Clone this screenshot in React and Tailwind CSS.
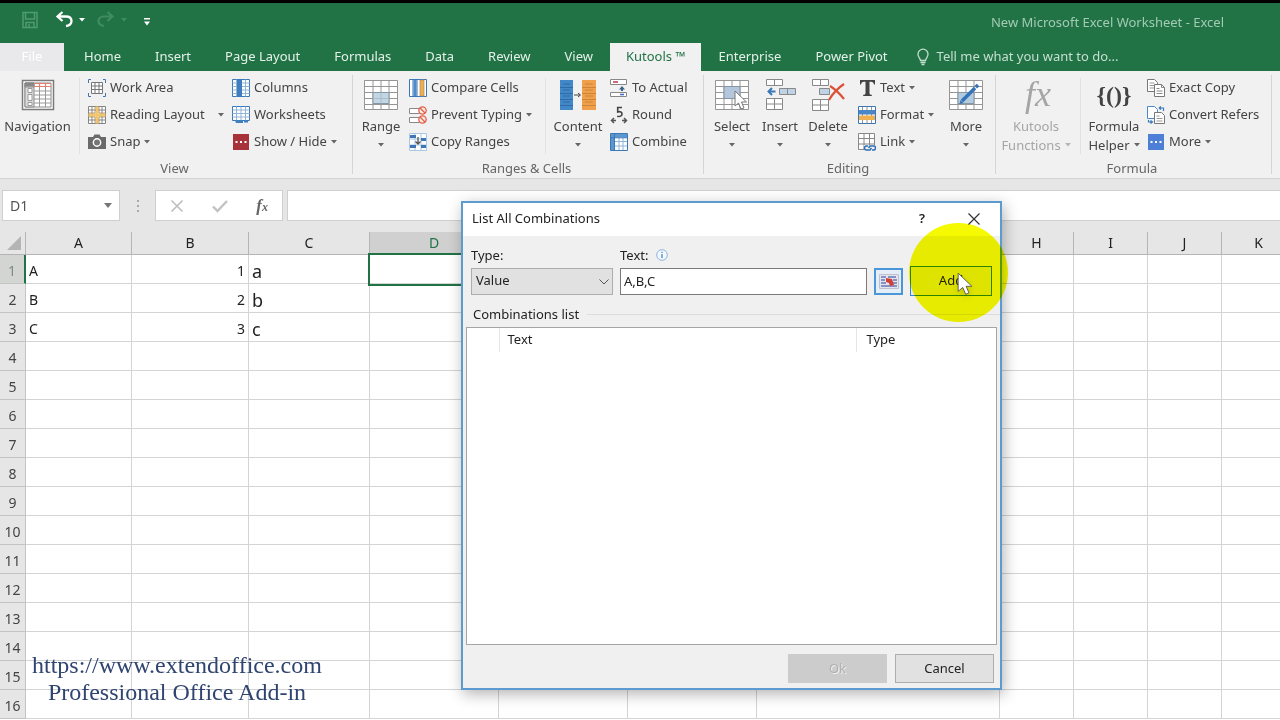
import React, { useState } from 'react'

const tabsBefore = ['Home', 'Insert', 'Page Layout', 'Formulas', 'Data', 'Review', 'View']
const tabsAfter = ['Enterprise', 'Power Pivot']

const columns = [
  { name: 'A', width: 'w-[106px]' },
  { name: 'B', width: 'w-[117px]' },
  { name: 'C', width: 'w-[121px]' },
  { name: 'D', width: 'w-[129px]' },
  { name: 'E', width: 'w-[129px]' },
  { name: 'F', width: 'w-[129px]' },
  { name: 'G', width: 'w-[243px]' },
  { name: 'H', width: 'w-[74px]' },
  { name: 'I', width: 'w-[74px]' },
  { name: 'J', width: 'w-[74px]' },
  { name: 'K', width: 'w-[74px]' },
]

const cells = {
  A1: 'A', B1: '1', C1: 'a',
  A2: 'B', B2: '2', C2: 'b',
  A3: 'C', B3: '3', C3: 'c',
}

const rows = Array.from({ length: 16 }, (_, i) => i + 1)

/* ---------- icons ---------- */

const Small = ({ children }) => (
  <svg viewBox="0 0 18 18" className="w-[18px] h-[18px] shrink-0" fill="none" aria-hidden="true">
    {children}
  </svg>
)

const Large = ({ children }) => (
  <svg viewBox="0 0 34 34" className="w-[34px] h-[34px] shrink-0" fill="none" aria-hidden="true">
    {children}
  </svg>
)

const Arrow = ({ className = 'text-[#666]' }) => (
  <svg viewBox="0 0 6 4" className={`w-[6px] h-[4px] shrink-0 ${className}`} aria-hidden="true">
    <path d="M0 0h6L3 3.5z" fill="currentColor" />
  </svg>
)

const NavigationIcon = () => (
  <Large>
    <path d="M1.5 2.5h31v29h-31z" fill="#fff" stroke="#7b7b7b" strokeWidth="1.5" />
    <path d="M4 5h26v24H4z" stroke="#8a8a8a" />
    <path d="M4 5h9v4H4zM4 5h9v24H4z" fill="#dcdcdc" stroke="#8a8a8a" />
    <path d="M4 5h9v3.5H4z" fill="#888" />
    <path d="M13 5.5h17M18.5 5v4M24.5 5v4M13 8.5h17" stroke="#e08070" strokeWidth="1.2" />
    <path d="M13 13h17M13 17h17M13 21h17M13 25h17M18.5 9v20M24.5 9v20" stroke="#999" />
    <path d="M7 10.5h4v4H7zM7 16.5h4v6H7zM7 24.5h4v3H7z" fill="#fff" stroke="#999" />
  </Large>
)

const WorkAreaIcon = () => (
  <Small>
    <path d="M.5 4V.5H3M15 .5h2.500V4M.5 14v3.500H3M15 17.500h2.500V14" stroke="#3b78b8" />
    <path d="M3.500 3.500h11v11h-11zM3.500 7h11M3.500 10.500h11M7 3.500v11M11 3.500v11" fill="#fff" stroke="#777" />
  </Small>
)

const ReadingLayoutIcon = () => (
  <Small>
    <path d="M.5 .5h17v17H.5zM.5 4h17M.5 14h17M4 .5v17M14 .5v17" fill="#fff" stroke="#858585" />
    <path d="M7.500 .5h3v17h-3zM.5 7.500h17v3H.5z" fill="#f4c66c" />
    <path d="M7 .5V7H.5M11 .5V7h6.500M7 17.500V11H.5M11 17.500V11h6.500" stroke="#a88a58" strokeWidth=".8" />
  </Small>
)

const SnapIcon = () => (
  <Small>
    <path d="M0 4h5l1.500-2.500h5L13 4h5v12H0z" fill="#6a6a6a" />
    <circle cx="9" cy="9.500" r="3.700" fill="#777" stroke="#fff" strokeWidth="1.400" />
  </Small>
)

const ColumnsIcon = () => (
  <Small>
    <path d="M.5 .5h17v17H.5z" fill="#fff" stroke="#3b78b8" />
    <path d="M.5 4h17M.5 7.500h17M.5 11h17M.5 14.500h17M4.500 .5v17M13.500 .5v17" stroke="#8fb4d8" />
    <path d="M5 .5h5v17H5z" fill="#3f7fbf" />
  </Small>
)

const WorksheetsIcon = () => (
  <Small>
    <path d="M.5 .5h17v14H.5z" fill="#fff" stroke="#3b78b8" />
    <path d="M.5 4h17M.5 7.500h17M.5 11h17M4.500 .5v14M9 .5v14M13.500 .5v14" stroke="#8fb4d8" />
    <path d="M3 14.500h8v2.500H4zM12 14.500h4v2h-4z" fill="#3f7fbf" />
  </Small>
)

const DotsIcon = ({ color }) => (
  <Small>
    <path d="M1 1h16v16H1z" fill={color} />
    <path d="M3.500 8h2v2h-2zM8 8h2v2H8zM12.500 8h2v2h-2z" fill="#fff" />
  </Small>
)

const GridLarge = ({ children }) => (
  <Large>
    <path d="M.5 2.500h33v29H.5z" fill="#fff" />
    <path d="M.5 2.500h33v29H.5zM.5 8.500h33M.5 14.500h33M.5 20.500h33M.5 26.500h33M9 2.500v29M17 2.500v29M25 2.500v29" stroke="#959595" />
    {children}
  </Large>
)

const RangeIcon = () => (
  <GridLarge>
    <path d="M9 14.500h16v11H9z" fill="#c3d6e4" stroke="#8597a5" />
    <path d="M9 20.500h16M17 14.500v11" stroke="#a8bccb" />
  </GridLarge>
)

const CompareIcon = () => (
  <Small>
    <path d="M.5 .5h17v17H.5zM4 .5v17M8 .5v17" fill="#fff" stroke="#3b78b8" />
    <path d="M4.500 1h3v16h-3z" fill="#4d8cc8" />
    <path d="M11 1h4v16h-4z" fill="#f0b050" stroke="#a88a60" strokeWidth=".7" />
  </Small>
)

const PreventIcon = () => (
  <Small>
    <path d="M.5 2.500h10v5H.5zM.5 11.500h10v5H.5z" fill="#fff" stroke="#888" />
    <g stroke="#e06048" strokeWidth="1.300" fill="#fbe9e5">
      <circle cx="13.500" cy="4.500" r="3.700" />
      <circle cx="13.500" cy="13.500" r="3.700" />
      <path d="M11 2l5 5M11 11l5 5" />
    </g>
  </Small>
)

const CopyRangesIcon = () => (
  <Small>
    <path d="M.5 .5h17v17H.5z" fill="#fff" stroke="#a9c6e2" />
    <path d="M.5 6h17M.5 12h17M6 .5v17M12 .5v17" stroke="#a9c6e2" />
    <path d="M1 2h6v3H1zM1 12h6v3H1zM12 5h5v3h-5zM12 12h5v3h-5z" fill="#3f76b8" />
    <path d="M9 4v7M6.500 8.500L9 11l2.500-2.500" stroke="#555" strokeWidth="1.300" />
  </Small>
)

const ContentIcon = () => (
  <svg viewBox="0 0 36 34" className="w-9 h-[34px] shrink-0" fill="none" aria-hidden="true">
    <path d="M0 2h13v30H0z" fill="#4288c8" />
    <path d="M22 2h14v30H22z" fill="#f0a04b" />
    <path d="M3 6h7M0 9.500h13M3 12h7M0 15.500h13M3 18h7M0 21.500h13M3 24h7M0 27.500h13" stroke="#2f6ba6" />
    <path d="M25 6h8M22 9.500h14M25 12h8M22 15.500h14M25 18h8M22 21.500h14M25 24h8M22 27.500h14" stroke="#cc8438" />
    <path d="M14 17h6M18 15l2.500 2-2.500 2" stroke="#444" />
  </svg>
)

const ToActualIcon = () => (
  <Small>
    <path d="M.5 .5h16v5H.5zM.5 13.500h16v4H.5z" fill="#fff" stroke="#888" />
    <path d="M3 3h5" stroke="#c2455a" strokeWidth="1.600" />
    <path d="M10 15.500h4" stroke="#4a6fd0" strokeWidth="1.600" />
    <path d="M12 7l3 3.500h-2V12h-2v-1.500H9z" fill="#3a5f90" />
  </Small>
)

const RoundIcon = () => (
  <Small>
    <path d="M12 1.500H7.700V6c2.500-.9 4.300 0 4.300 2s-2 3-4.800 2.200" stroke="#444" strokeWidth="1.600" />
    <path d="M6 14.500H1.500M4 12l-2.500 2.500L4 17M12 14.500h4.500M14 12l2.500 2.500L14 17" stroke="#555" strokeWidth="1.500" />
  </Small>
)

const CombineIcon = () => (
  <Small>
    <path d="M.5 .5h17v17H.5z" fill="#fff" stroke="#3b78b8" />
    <path d="M5 8.500h12M5 13h12M9 5v12M13 5v12" stroke="#8fb4d8" />
    <path d="M1 1h3.500v16H1z" fill="#5b97cf" />
    <path d="M4.500 1H17v3.500H4.500z" fill="#5b97cf" />
    <path d="M4.500 .5v17M.5 4.800h17" stroke="#3b78b8" />
  </Small>
)

const Pointer = ({ className }) => (
  <svg viewBox="0 0 14 21" className={className} aria-hidden="true">
    <path d="M1 1v16l4-3.500 2.600 6 2.900-1.200L8 12.500h5z" fill="#fff" stroke="#555" strokeWidth=".8" />
  </svg>
)

const SelectIcon = () => (
  <GridLarge>
    <path d="M9 8.500h16v12H9z" fill="#b3c6dc" stroke="#8597a5" />
    <path d="M20 13v15l3.500-3 2.500 6 3-1-2.500-6h5z" fill="#fff" stroke="#777" />
  </GridLarge>
)

const InsertIcon = () => (
  <Large>
    <path d="M3.500 1.500h16v6h-16zM11.500 1.500v6M3.500 20.500h16v11h-16zM11.500 20.500v11M3.500 26h16" fill="#fff" stroke="#888" />
    <path d="M16.500 10.500h16v6h-16zM24.500 10.500v6" fill="#c0d2e6" stroke="#888" />
    <path d="M12.500 13.500H5M9 10l-3.500 3.500L9 17" stroke="#3b78b8" strokeWidth="2" />
  </Large>
)

const DeleteIcon = () => (
  <Large>
    <path d="M1.500 1.500h16v6h-16zM9.500 1.500v6M1.500 21.500h16v11h-16zM9.500 21.500v11M1.500 27h16" fill="#fff" stroke="#888" />
    <path d="M8.500 10.500h10v6h-10z" fill="#c0d2e6" stroke="#888" />
    <path d="M19 8c5 3 10 8 14 13M33 6c-6 4-11 9-15 16" stroke="#dc5035" strokeWidth="2.200" />
  </Large>
)

const TextIcon = () => (
  <Small>
    <path d="M2 1h15v4.500h-1c-.4-2-1.200-2.800-3-2.800h-1.500V14c0 1.300.5 1.700 2.300 1.800V17H5.200v-1.200c1.800-.1 2.300-.5 2.300-1.800V2.700H6C4.200 2.700 3.400 3.500 3 5.500H2z" fill="#444" />
  </Small>
)

const FormatIcon = () => (
  <Small>
    <path d="M.5 .5h17v17H.5z" fill="#fff" stroke="#3b78b8" />
    <path d="M4.500 .5v17M9 .5v17M13.500 .5v17" stroke="#777" strokeWidth=".8" />
    <path d="M1 4h16v4.500H1z" fill="#4d86c6" />
    <path d="M1 9.500h16V14H1z" fill="#f0b050" />
  </Small>
)

const LinkIcon = () => (
  <Small>
    <path d="M.5 .5h16v16H.5zM.5 5.500h16M.5 11h16M6 .5v16M11.500 .5v16" fill="#fff" stroke="#888" />
    <path d="M6 12h12v6H6z" fill="#f1f1f1" />
    <path d="M10 13H8.500a2 2 0 000 4H12l1.500-2M14 17h1.500a2 2 0 000-4H12l-1.500 2" stroke="#2e70b8" strokeWidth="1.500" />
  </Small>
)

const MoreEditIcon = () => (
  <GridLarge>
    <path d="M9 14.500h16v11H9z" fill="#b3cbe0" stroke="#8597a5" />
    <path d="M13 23L26 10" stroke="#3572b8" strokeWidth="3.600" />
    <path d="M26.800 9.200L29 7" stroke="#3572b8" strokeWidth="3.600" />
    <path d="M10.500 26l1-4 3 3z" fill="#3572b8" />
  </GridLarge>
)

const ExactCopyIcon = () => (
  <Small>
    <path d="M.5 .5h7l3 3v9H.5z" fill="#fff" stroke="#777" />
    <path d="M2.500 4h5M2.500 6.500h5M2.500 9h5" stroke="#999" />
    <path d="M7.500 5.500h7l3 3v9h-10z" fill="#fff" stroke="#777" />
    <path d="M14.500 5.500v3h3M9.500 9.500h3M9.500 12h6M9.500 14.500h6" stroke="#888" />
  </Small>
)

const ConvertIcon = () => (
  <Small>
    <path d="M.5 .5h7l3 3v9H.5z" fill="#fff" stroke="#4a8ac8" />
    <path d="M7.500 6.500h7l3 3v8h-10z" fill="#fff" stroke="#777" />
    <path d="M9.500 10h3M9.500 12.500h6M9.500 15h6" stroke="#999" />
    <path d="M12 2h4.500v3M12 2l2-1.500M12 2l2 1.500M1.500 14v2H5M3.500 14.500L5.500 16l-2 1.500" stroke="#3b78b8" strokeWidth="1.200" />
  </Small>
)

/* ---------- ribbon parts ---------- */

const SmallButton = ({ icon, label, menu }) => (
  <button type="button" className="flex items-center gap-1 h-[27px] text-left whitespace-nowrap">
    {icon}
    <span>{label}</span>
    {menu && <Arrow />}
  </button>
)

const LargeButton = ({ icon, label, menu, width = 'w-12' }) => (
  <button type="button" className={`flex flex-col items-center self-start pt-1 shrink-0 ${width}`}>
    {icon}
    <span className="mt-1 leading-5 whitespace-nowrap">{label}</span>
    {menu && <Arrow className="mt-[7px] text-[#666]" />}
  </button>
)

const Divider = () => <div className="w-px h-[76px] mt-1 mx-1 bg-[#e2e2e2] shrink-0"></div>

const Group = ({ label, width, children }) => (
  <section className={`flex flex-col shrink-0 relative pt-[3px] ${width}`}>
    <div className="flex h-[85px]">{children}</div>
    <h2 className="text-center leading-[18px] pr-1 text-[#666]">{label}</h2>
    <div className="absolute right-0 top-1 bottom-1 w-px bg-[#d5d5d5]"></div>
  </section>
)

const Ribbon = () => (
  <div className="flex h-[108px] bg-[#f1f1f1] border-b border-[#d2d2d2] text-[13px] text-[#444] overflow-hidden">
    <Group label="View" width="w-[353px]">
      <LargeButton icon={<NavigationIcon />} label="Navigation" width="w-[75px]" />
      <Divider />
      <div className="grid grid-cols-[144px_auto] content-start ml-1">
        <SmallButton icon={<WorkAreaIcon />} label="Work Area" />
        <SmallButton icon={<ColumnsIcon />} label="Columns" />
        <div className="flex items-center justify-between pr-2">
          <SmallButton icon={<ReadingLayoutIcon />} label="Reading Layout" />
          <Arrow />
        </div>
        <SmallButton icon={<WorksheetsIcon />} label="Worksheets" />
        <SmallButton icon={<SnapIcon />} label="Snap" menu />
        <SmallButton icon={<DotsIcon color="#a8323a" />} label="Show / Hide" menu />
      </div>
    </Group>

    <Group label="Ranges & Cells" width="w-[351px]">
      <div className="w-1"></div>
      <LargeButton icon={<RangeIcon />} label="Range" menu />
      <div className="flex flex-col w-[132px] ml-1">
        <SmallButton icon={<CompareIcon />} label="Compare Cells" />
        <SmallButton icon={<PreventIcon />} label="Prevent Typing" menu />
        <SmallButton icon={<CopyRangesIcon />} label="Copy Ranges" />
      </div>
      <Divider />
      <LargeButton icon={<ContentIcon />} label="Content" width="w-14" menu />
      <div className="flex flex-col ml-1">
        <SmallButton icon={<ToActualIcon />} label="To Actual" />
        <SmallButton icon={<RoundIcon />} label="Round" />
        <SmallButton icon={<CombineIcon />} label="Combine" />
      </div>
    </Group>

    <Group label="Editing" width="w-[292px]">
      <div className="w-1"></div>
      <LargeButton icon={<SelectIcon />} label="Select" menu />
      <LargeButton icon={<InsertIcon />} label="Insert" menu />
      <LargeButton icon={<DeleteIcon />} label="Delete" menu />
      <div className="flex flex-col w-[84px] ml-[6px]">
        <SmallButton icon={<TextIcon />} label="Text" menu />
        <SmallButton icon={<FormatIcon />} label="Format" menu />
        <SmallButton icon={<LinkIcon />} label="Link" menu />
      </div>
      <LargeButton icon={<MoreEditIcon />} label="More" menu />
    </Group>

    <Group label="Formula" width="w-[276px]">
      <button type="button" disabled className="flex flex-col items-center self-start pt-1 w-20 text-[#a5a5a5]">
        <span className="h-[34px] pl-1 font-['Liberation_Serif',serif] italic text-[36px] leading-[32px]">fx</span>
        <span className="mt-1 leading-5">Kutools</span>
        <span className="flex items-center gap-1 leading-[18px]">
          Functions <Arrow className="text-[#b5b5b5]" />
        </span>
      </button>
      <Divider />
      <button type="button" className="flex flex-col items-center self-start pt-1 w-[58px]">
        <span className="h-[34px] font-['Liberation_Serif',serif] font-bold text-[24px] leading-[34px]">{'{()}'}</span>
        <span className="mt-1 leading-5">Formula</span>
        <span className="flex items-center gap-1 leading-[18px]">
          Helper <Arrow />
        </span>
      </button>
      <div className="flex flex-col ml-1">
        <SmallButton icon={<ExactCopyIcon />} label="Exact Copy" />
        <SmallButton icon={<ConvertIcon />} label="Convert Refers" />
        <SmallButton icon={<DotsIcon color="#4d7fd6" />} label="More" menu />
      </div>
    </Group>
  </div>
)

const TitleBar = () => (
  <header className="flex items-center justify-between h-10 pl-[21px] pr-14 text-white">
    <div className="flex items-center gap-2 pb-[6px]">
      <button type="button" aria-label="Save">
        <svg viewBox="0 0 18 18" className="w-[18px] h-[18px] text-[#4f9a70]" fill="none" stroke="currentColor" strokeWidth="1.500">
          <path d="M2 1.500h14v15H2zM4.500 1.500V8h9V1.500M5 16.500v-5h8v5M8 13v3" />
        </svg>
      </button>
      <button type="button" aria-label="Undo" className="flex items-center gap-[6px] ml-2">
        <svg viewBox="0 0 18 18" className="w-[18px] h-[18px]" fill="none" stroke="currentColor" strokeWidth="2.300">
          <path d="M7.500 1L2.500 5.500l5 4.500M3 5.500h8c3.500 0 5.500 2 5.500 4.500S14.500 14.500 11 15" />
        </svg>
        <Arrow className="text-white" />
      </button>
      <button type="button" aria-label="Redo" className="flex items-center gap-[6px] ml-1">
        <svg viewBox="0 0 18 18" className="w-[18px] h-[18px] text-[#3f8c61]" fill="none" stroke="currentColor" strokeWidth="2.200">
          <path d="M10.500 1l5 4.500-5 4.500M15 5.500H7C3.500 5.500 1.500 7.500 1.500 10s2 4.500 5.500 5" />
        </svg>
        <Arrow className="text-[#3f8c61]" />
      </button>
      <button type="button" aria-label="Customize Quick Access Toolbar" className="ml-2 pt-1">
        <svg viewBox="0 0 8 8" className="w-2 h-2">
          <path d="M1 0h6v1.500H1zM1 3.500h6L4 7.500z" fill="currentColor" />
        </svg>
      </button>
    </div>
    <h1 className="text-[13px] text-[#a3cbb4]">New Microsoft Excel Worksheet - Excel</h1>
  </header>
)

const Tabs = () => (
  <nav className="flex h-7 text-[13px] text-[#e4f1e9] whitespace-nowrap">
    <button type="button" className="w-16 bg-[#e9e9ec] text-white">File</button>
    <div className="w-[3px]"></div>
    {tabsBefore.map((tab) => (
      <button type="button" key={tab} className="px-[17px]">{tab}</button>
    ))}
    <button type="button" className="px-4 bg-[#f1f1f1] text-[#217346]">Kutools ™</button>
    {tabsAfter.map((tab) => (
      <button type="button" key={tab} className="px-[17px]">{tab}</button>
    ))}
    <button type="button" className="flex items-center gap-2 pl-3 text-[#c5dfd0]">
      <svg viewBox="0 0 12 18" className="w-3 h-[18px]" fill="none" stroke="currentColor" strokeWidth="1.300">
        <path d="M3.500 12.500c0-2-2.500-3.200-2.500-6.300a5 5 0 0110 0c0 3.100-2.500 4.300-2.500 6.300zM3.500 14.500h5M4.500 16.500h3" />
      </svg>
      Tell me what you want to do...
    </button>
  </nav>
)

const FormulaBar = () => (
  <div className="flex items-center h-[53px] pl-[2px] bg-[#e6e6e6] text-[14px] text-[#555]">
    <div className="flex items-center justify-between w-[118px] h-[31px] px-[7px] bg-white border border-[#cfcfcf]">
      <input aria-label="Name box" defaultValue="D1" className="w-16 bg-transparent outline-none" />
      <svg viewBox="0 0 8 5" className="w-2 h-[5px]"><path d="M0 0h8L4 5z" fill="#777" /></svg>
    </div>
    <div className="flex flex-col items-center gap-[3px] w-[35px]">
      <span className="w-[2px] h-[2px] bg-[#aaa]"></span>
      <span className="w-[2px] h-[2px] bg-[#aaa]"></span>
      <span className="w-[2px] h-[2px] bg-[#aaa]"></span>
    </div>
    <div className="flex items-center justify-around w-[128px] h-[31px] bg-white border border-[#cfcfcf]">
      <button type="button" aria-label="Cancel entry">
        <svg viewBox="0 0 14 14" className="w-[14px] h-[14px]" stroke="#bdbdbd" strokeWidth="1.600"><path d="M1.500 1.500l11 11M12.500 1.500l-11 11" /></svg>
      </button>
      <button type="button" aria-label="Enter">
        <svg viewBox="0 0 16 14" className="w-4 h-[14px]" fill="none" stroke="#c2c2c2" strokeWidth="2.400"><path d="M1 7.500l4.500 4.500L15 2" /></svg>
      </button>
      <button type="button" className="font-['Liberation_Serif',serif] font-bold italic text-[17px] text-[#666]">
        f<span className="text-[12px]">x</span>
      </button>
    </div>
    <input aria-label="Formula" className="flex-1 min-w-0 h-[31px] ml-1 px-2 bg-white border border-r-0 border-[#cfcfcf] outline-none" />
  </div>
)

const Sheet = () => (
  <table className="table-fixed border-separate border-spacing-0 w-max text-[14px] text-[#222]">
    <colgroup>
      <col className="w-[26px]" />
      {columns.map((col) => (
        <col key={col.name} className={col.width} />
      ))}
    </colgroup>
    <thead>
      <tr className="h-[23px] bg-[#e6e6e6]">
        <th className="p-0 border-r border-b border-[#b5b5b5]">
          <svg viewBox="0 0 14 14" className="w-[14px] h-[14px] ml-auto mr-1"><path d="M14 0v14H0z" fill="#b4b4b4" /></svg>
        </th>
        {columns.map((col) => (
          <th
            key={col.name}
            className={`p-0 border-r border-b leading-5 font-normal ${
              col.name === 'D' ? 'bg-[#d0d0d0] text-[#217346] border-[#217346]' : 'border-[#b5b5b5]'
            }`}
          >
            {col.name}
          </th>
        ))}
      </tr>
    </thead>
    <tbody>
      {rows.map((row) => (
        <tr key={row} className="h-[29px]">
          <th
            className={`p-0 pt-1 border-r border-b font-normal leading-6 ${
              row === 1 ? 'bg-[#d3d5d3] text-[#7c8c83] border-r-2 border-r-[#217346] border-b-[#c4c4c4]' : 'bg-[#e6e6e6] text-[#444] border-[#c4c4c4]'
            }`}
          >
            {row}
          </th>
          {columns.map((col) => (
            <td
              key={col.name}
              className={`p-0 px-[3px] pt-1 border-r border-b border-[#d4d4d4] leading-6 ${col.name === 'B' ? 'text-right' : ''} ${
                col.name === 'C' ? 'text-[18px]' : ''
              } ${col.name === 'D' && row === 1 ? 'outline-2 outline-[#217346] bg-white' : ''}`}
            >
              {cells[col.name + row]}
            </td>
          ))}
        </tr>
      ))}
    </tbody>
  </table>
)

const CombinationsDialog = () => {
  const [text, setText] = useState('A,B,C')

  return (
    <div
      role="dialog"
      aria-label="List All Combinations"
      className="absolute left-[461px] top-[201px] flex flex-col w-[541px] h-[489px] bg-[#f0f0f0] border-2 border-[#5b9bd0] shadow-[2px_4px_14px_rgba(0,0,0,0.3)] text-[13px] text-[#222]"
    >
      <div className="flex items-center h-[33px] pb-[2px] pl-[9px] pr-5 bg-white">
        <h2 className="flex-1">List All Combinations</h2>
        <button type="button" className="w-5 font-semibold">?</button>
        <button type="button" aria-label="Close" className="ml-9">
          <svg viewBox="0 0 12 12" className="w-3 h-3" stroke="#333" strokeWidth="1.200"><path d="M.5 .5l11 11M11.500 .5l-11 11" /></svg>
        </button>
      </div>

      <div className="grid grid-cols-[142px_247px_29px_82px] gap-x-[7px] gap-y-px items-center pl-2 pt-[9px]">
        <label htmlFor="type" className="leading-5">Type:</label>
        <label htmlFor="text" className="flex items-center gap-2 leading-5">
          Text:
          <svg viewBox="0 0 12 12" className="w-3 h-3" fill="none" stroke="#8cb4dc">
            <circle cx="6" cy="6" r="5.300" fill="#f4f9ff" />
            <path d="M6 5v4M6 2.800v1.200" stroke="#4a86c8" strokeWidth="1.300" />
          </svg>
        </label>
        <span></span>
        <span></span>

        <div className="relative">
          <select id="type" className="w-full h-[27px] pl-1 appearance-none bg-[#e1e1e1] border border-[#adadad]">
            <option>Value</option>
            <option>Custom</option>
          </select>
          <svg viewBox="0 0 10 6" className="absolute right-1 top-[11px] w-[10px] h-[6px] pointer-events-none" fill="none" stroke="#555">
            <path d="M.5 .5L5 5 9.500 .5" />
          </svg>
        </div>
        <input
          id="text"
          value={text}
          onChange={(e) => setText(e.target.value)}
          className="h-[27px] px-[3px] bg-white border border-[#7a7a7a] outline-none"
        />
        <button type="button" aria-label="Select range" className="flex items-center justify-center h-[27px] bg-[#e4eef8] border-2 border-[#4a96d8]">
          <svg viewBox="0 0 20 15" className="w-5 h-[15px]">
            <path d="M.5 .5h19v14H.5z" fill="#e4e4ee" stroke="#c0c0cc" />
            <path d="M2 3h5M9 3h8M2 6h4M14 6h4M2 9h5M14 9h4M2 12h16" stroke="#6678b4" strokeWidth="1.500" />
            <path d="M7 4l6 1 2 6-4 1-1-3-3-1z" fill="#d04038" />
          </svg>
        </button>
        <button type="button" className="h-[30px] bg-[#e8e8e8] border border-[#2f86d0]">Add</button>
      </div>

      <div className="flex items-center gap-2 pl-[10px] pt-2">
        <h3 className="leading-5">Combinations list</h3>
        <div className="flex-1 h-px bg-[#dcdcdc]"></div>
      </div>

      <div className="flex-1 mx-[3px] mt-[3px] bg-white border border-[#a5a5a5]">
        <table className="w-full table-fixed">
          <thead>
            <tr className="h-6 text-left">
              <th className="w-8 border-r border-[#e5e5e5]"></th>
              <th className="pl-2 font-normal border-r border-[#e5e5e5]">Text</th>
              <th className="w-[140px] pl-[10px] font-normal">Type</th>
            </tr>
          </thead>
        </table>
      </div>

      <div className="flex justify-end items-center gap-2 h-[43px] pt-1 pr-[6px]">
        <button type="button" disabled className="w-[99px] h-[29px] bg-[#cccccc] text-[#b0b0b0] [text-shadow:1px_1px_0_#f0f0f0]">Ok</button>
        <button type="button" className="w-[99px] h-[29px] bg-[#e1e1e1] border border-[#adadad]">Cancel</button>
      </div>
    </div>
  )
}

export default function App() {
  return (
    <div className="relative h-screen overflow-hidden bg-white font-['Noto_Sans',sans-serif] select-none">
      <div className="bg-[#217346] border-t-[3px] border-black">
        <TitleBar />
        <Tabs />
      </div>
      <Ribbon />
      <FormulaBar />
      <Sheet />

      {/* Watermark */}
      <div className="absolute left-8 bottom-[14px] text-center font-['Liberation_Serif',serif] text-[24px] leading-[27px] text-[#2f4470]">
        <p>https://www.extendoffice.com</p>
        <p>Professional Office Add-in</p>
      </div>

      <CombinationsDialog />

      {/* Click highlight and mouse pointer */}
      <div className="absolute left-[909px] top-[223px] w-[99px] h-[99px] rounded-full bg-[#f6fa00] mix-blend-multiply pointer-events-none"></div>
      <Pointer className="absolute left-[957px] top-[272px] w-4 h-6 pointer-events-none drop-shadow-md" />
    </div>
  )
}
